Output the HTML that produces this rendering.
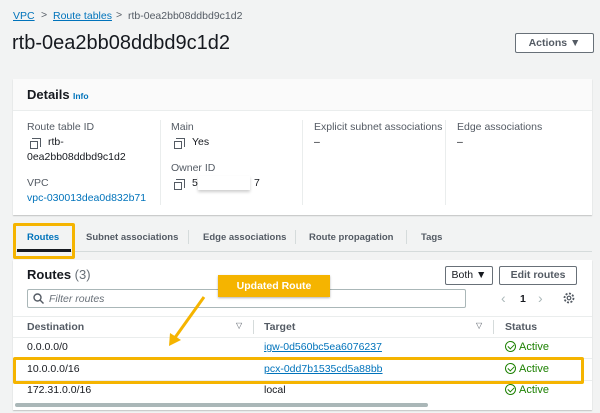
<!DOCTYPE html>
<html><head><style>
*{box-sizing:border-box;margin:0;padding:0}
body{width:600px;height:413px;background:#f2f3f3;font-family:"Liberation Sans",sans-serif;font-size:10.5px;color:#16191f;position:relative;overflow:hidden}
.a{position:absolute;white-space:nowrap}
.lnk{color:#0073bb}
.u{text-decoration:underline}
.btn{position:absolute;border:1px solid #687078;background:#fff;border-radius:2px;font-weight:bold;color:#545b64;text-align:center;font-size:10.5px}
.cp{position:absolute;width:8px;height:8px;border:1.2px solid #545b64;background:#fff}
.cp:before{content:"";position:absolute;left:1px;top:-4px;width:8px;height:8px;border-top:1.2px solid #545b64;border-right:1.2px solid #545b64}
.vl{position:absolute;width:1px;background:#eaeded}
.ok{display:inline-block;width:11px;height:11px;border:1.3px solid #1d8102;border-radius:50%;vertical-align:-2px;margin-right:3px;position:relative}
.ok:after{content:"";position:absolute;left:3px;top:1px;width:3px;height:5px;border-right:1.3px solid #1d8102;border-bottom:1.3px solid #1d8102;transform:rotate(45deg)}
.act{color:#1d8102;font-size:11px}
.tab{position:absolute;top:232px;font-weight:bold;color:#545b64;font-size:9.5px;white-space:nowrap}
</style></head><body>
<div class="a lnk u" style="left:13px;top:10px">VPC</div>
<div class="a" style="left:41px;top:9px;color:#545b64">&gt;</div>
<div class="a lnk u" style="left:53px;top:10px">Route tables</div>
<div class="a" style="left:116px;top:9px;color:#545b64">&gt;</div>
<div class="a" style="left:128px;top:10px;color:#545b64">rtb-0ea2bb08ddbd9c1d2</div>
<div class="a" style="left:12px;top:32px;font-size:20px">rtb-0ea2bb08ddbd9c1d2</div>
<div class="btn" style="left:515px;top:33px;width:79px;height:20px;line-height:18px">Actions ▼</div>

<div class="a" style="left:13px;top:79px;width:579px;height:136px;background:#fff;box-shadow:0 1px 1px rgba(0,0,0,.2)"></div>
<div class="a" style="left:13px;top:79px;width:579px;height:32px;background:#fafafa;border-bottom:1px solid #eaeded"></div>
<div class="a" style="left:27px;top:87px;font-size:13px;font-weight:bold">Details</div>
<div class="a lnk" style="left:73px;top:91px;font-size:8.5px;font-weight:bold">Info</div>
<div class="vl" style="left:160px;top:120px;height:85px"></div>
<div class="vl" style="left:302px;top:120px;height:85px"></div>
<div class="vl" style="left:445px;top:120px;height:85px"></div>
<div class="a" style="left:27px;top:121px;color:#545b64">Route table ID</div>
<div class="cp" style="left:30px;top:141px"></div>
<div class="a" style="left:48px;top:136px">rtb-</div>
<div class="a" style="left:27px;top:151px">0ea2bb08ddbd9c1d2</div>
<div class="a" style="left:27px;top:177px;color:#545b64">VPC</div>
<div class="a lnk" style="left:27px;top:192px">vpc-030013dea0d832b71</div>
<div class="a" style="left:171px;top:121px;color:#545b64">Main</div>
<div class="cp" style="left:174px;top:141px"></div>
<div class="a" style="left:192px;top:136px">Yes</div>
<div class="a" style="left:171px;top:162px;color:#545b64">Owner ID</div>
<div class="cp" style="left:174px;top:182px"></div>
<div class="a" style="left:192px;top:177px">5</div>
<div class="a" style="left:198px;top:176px;width:52px;height:14px;background:#fff;box-shadow:0 2px 3px rgba(0,0,0,.2)"></div>
<div class="a" style="left:254px;top:177px">7</div>
<div class="a" style="left:314px;top:121px;color:#545b64">Explicit subnet associations</div>
<div class="a" style="left:314px;top:136px">–</div>
<div class="a" style="left:457px;top:121px;color:#545b64">Edge associations</div>
<div class="a" style="left:457px;top:136px">–</div>

<div class="a" style="left:13px;top:251px;width:579px;height:1px;background:#d5dbdb"></div>
<div class="tab" style="left:27px;color:#0073bb">Routes</div>
<div class="a" style="left:17px;top:249px;width:54px;height:3px;background:#16191f"></div>
<div class="tab" style="left:86px">Subnet associations</div>
<div class="vl" style="left:188px;top:230px;height:14px;background:#d5dbdb"></div>
<div class="tab" style="left:203px">Edge associations</div>
<div class="vl" style="left:295px;top:230px;height:14px;background:#d5dbdb"></div>
<div class="tab" style="left:309px">Route propagation</div>
<div class="vl" style="left:406px;top:230px;height:14px;background:#d5dbdb"></div>
<div class="tab" style="left:421px">Tags</div>
<div class="a" style="left:13px;top:223px;width:62px;height:36px;border:3px solid #f5b400;border-radius:2px"></div>

<div class="a" style="left:13px;top:260px;width:579px;height:150px;background:#fff;box-shadow:0 1px 1px rgba(0,0,0,.2)"></div>
<div class="a" style="left:27px;top:267px;font-size:13px;font-weight:bold">Routes <span style="font-weight:normal;color:#687078">(3)</span></div>
<div class="btn" style="left:445px;top:266px;width:48px;height:19px;line-height:17px;font-weight:normal;color:#16191f">Both ▼</div>
<div class="btn" style="left:499px;top:266px;width:78px;height:19px;line-height:17px">Edit routes</div>
<div class="a" style="left:27px;top:289px;width:439px;height:19px;border:1px solid #aab7b8;border-radius:2px;background:#fff"></div>
<svg class="a" style="left:33px;top:293px" width="11" height="11"><circle cx="4.5" cy="4.5" r="3.5" fill="none" stroke="#545b64" stroke-width="1.4"/><line x1="7" y1="7" x2="10.5" y2="10.5" stroke="#545b64" stroke-width="1.4"/></svg>
<div class="a" style="left:49px;top:293px;font-style:italic;color:#687078">Filter routes</div>
<div class="a" style="left:501px;top:290px;color:#aab7b8;font-size:14px">&lsaquo;</div>
<div class="a" style="left:520px;top:293px;font-weight:bold">1</div>
<div class="a" style="left:538px;top:290px;color:#aab7b8;font-size:14px">&rsaquo;</div>
<svg class="a" style="left:563px;top:292px" width="12" height="12"><circle cx="6" cy="6" r="4.5" fill="none" stroke="#545b64" stroke-width="1.8" stroke-dasharray="2 1.5"/><circle cx="6" cy="6" r="1.8" fill="none" stroke="#545b64" stroke-width="1.2"/></svg>

<div class="a" style="left:13px;top:316px;width:579px;height:1px;background:#eaeded"></div>
<div class="a" style="left:27px;top:321px;font-weight:bold;color:#545b64">Destination</div>
<div class="a" style="left:236px;top:321px;font-size:8px;color:#545b64">▽</div>
<div class="vl" style="left:253px;top:320px;height:14px;background:#d5dbdb"></div>
<div class="a" style="left:264px;top:321px;font-weight:bold;color:#545b64">Target</div>
<div class="a" style="left:476px;top:321px;font-size:8px;color:#545b64">▽</div>
<div class="vl" style="left:493px;top:320px;height:14px;background:#d5dbdb"></div>
<div class="a" style="left:505px;top:321px;font-weight:bold;color:#545b64">Status</div>
<div class="a" style="left:13px;top:337px;width:579px;height:1px;background:#eaeded"></div>
<div class="a" style="left:13px;top:358px;width:579px;height:1px;background:#eaeded"></div>
<div class="a" style="left:13px;top:380px;width:579px;height:1px;background:#eaeded"></div>
<div class="a" style="left:27px;top:341px">0.0.0.0/0</div>
<div class="a lnk u" style="left:264px;top:341px">igw-0d560bc5ea6076237</div>
<div class="a act" style="left:505px;top:341px"><span class="ok"></span>Active</div>
<div class="a" style="left:27px;top:363px">10.0.0.0/16</div>
<div class="a lnk u" style="left:264px;top:363px">pcx-0dd7b1535cd5a88bb</div>
<div class="a act" style="left:505px;top:363px"><span class="ok"></span>Active</div>
<div class="a" style="left:27px;top:384px">172.31.0.0/16</div>
<div class="a" style="left:264px;top:384px">local</div>
<div class="a act" style="left:505px;top:384px"><span class="ok"></span>Active</div>
<div class="a" style="left:15px;top:403px;width:413px;height:4px;background:#aab7b8;border-radius:2px"></div>
<div class="a" style="left:13px;top:357px;width:571px;height:27px;border:3px solid #f5b400;border-radius:2px"></div>

<div class="a" style="left:218px;top:275px;width:112px;height:22px;background:#f5b400;color:#fff;font-weight:bold;text-align:center;line-height:22px;box-shadow:0 1px 2px rgba(0,0,0,.3)">Updated Route</div>
<svg class="a" style="left:160px;top:295px" width="50" height="55"><line x1="44" y1="2" x2="14" y2="44" stroke="#f5b400" stroke-width="3"/><polygon points="9,51 10,38 21,45" fill="#f5b400"/></svg>
</body></html>
